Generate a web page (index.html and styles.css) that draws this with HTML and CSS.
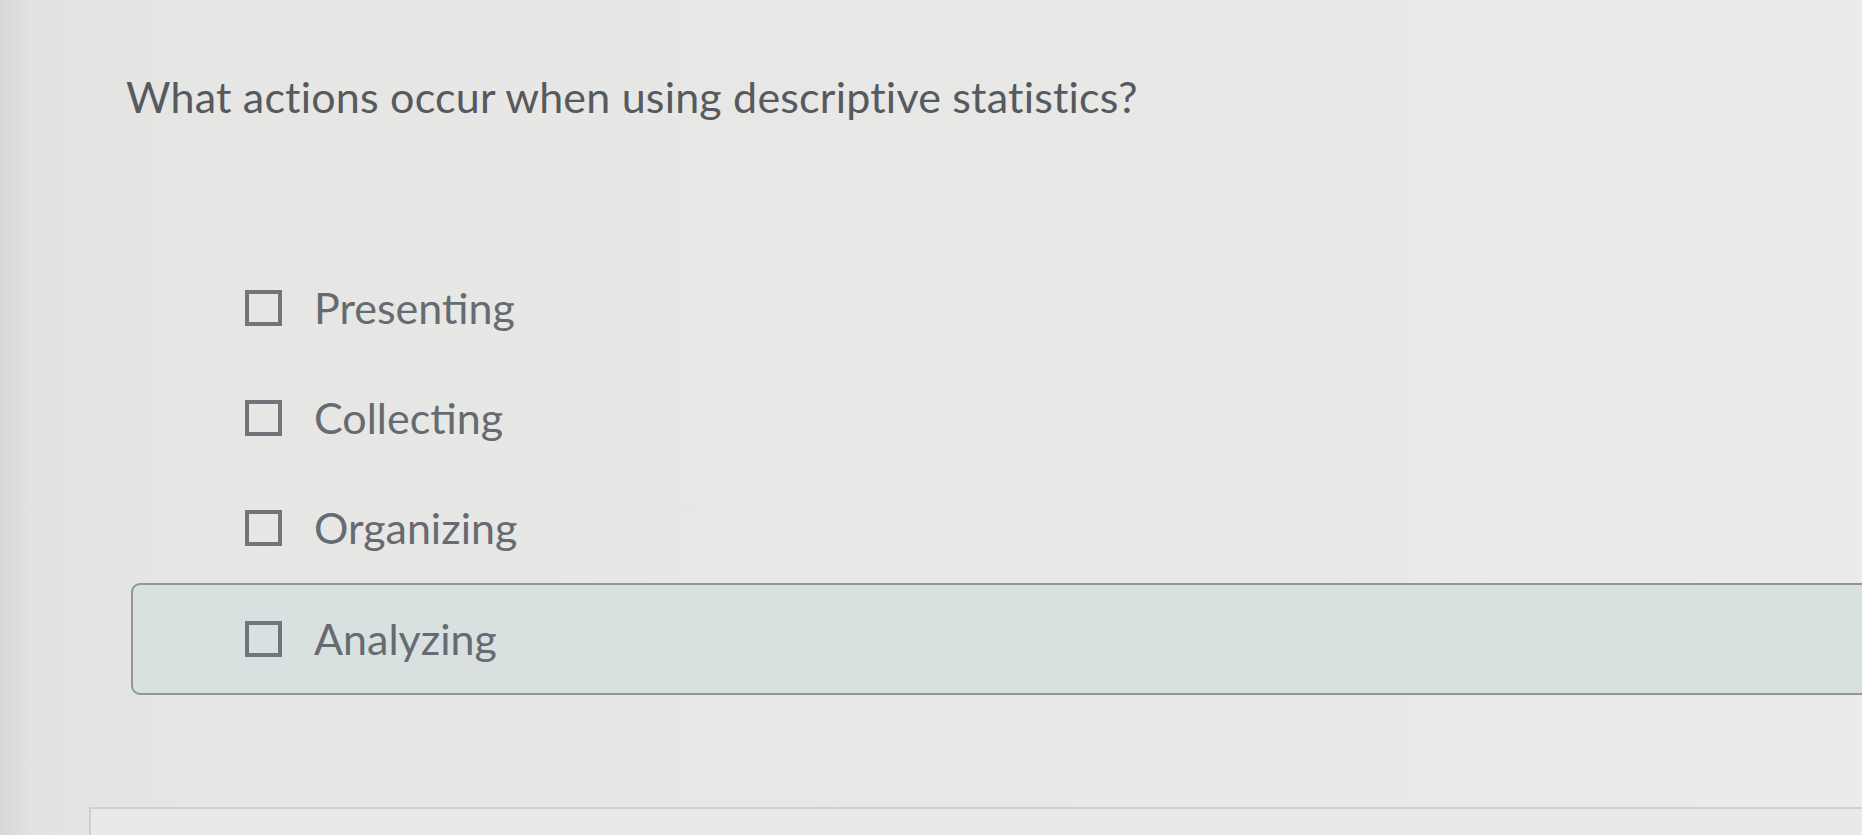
FILE: index.html
```html
<!DOCTYPE html>
<html lang="en">
<head>
<meta charset="utf-8">
<title>Descriptive statistics question</title>
<link rel="stylesheet" href="styles.css">
</head>
<body>
<div class="page">
  <h1 class="question">What actions occur when using descriptive statistics?</h1>
  <ul class="options">
    <li class="option"><span class="box"></span><span class="label">Presenting</span></li>
    <li class="option"><span class="box"></span><span class="label">Collecting</span></li>
    <li class="option"><span class="box"></span><span class="label">Organizing</span></li>
    <li class="option option-active"><span class="box"></span><span class="label">Analyzing</span></li>
  </ul>
  <div class="next-panel"></div>
</div>
</body>
</html>
```

FILE: styles.css
```css
html, body {
  margin: 0;
  padding: 0;
  height: 100%;
  overflow: hidden;
}
body {
  background: linear-gradient(90deg, #d6d7d6 0px, #e2e2e1 30px, #e6e6e4 200px, #e8e8e6 60%, #ebebea 100%);
  font-family: Lato, "Open Sans", "Liberation Sans", sans-serif;
}
.page {
  padding-top: 72px;
  padding-left: 126px;
}
.question {
  margin: 0;
  font-size: 43px;
  line-height: 50px;
  font-weight: 400;
  color: #565a5e;
  letter-spacing: 0.2px;
}
.options {
  list-style: none;
  margin: 131px 0 0 5px;
  padding: 0;
  width: 1800px;
}
.option {
  display: flex;
  align-items: center;
  gap: 32px;
  height: 110px;
  box-sizing: border-box;
  padding-left: 114px;
  color: #656b70;
  font-size: 43px;
}
.option-active {
  background: #d8e1e0;
  border: 2px solid #8d979b;
  border-radius: 9px;
  padding-left: 112px;
  height: 112px;
}
.box {
  width: 37px;
  height: 36px;
  box-sizing: border-box;
  border: 4px solid #6f7579;
  flex: none;
}
.label {
  line-height: 50px;
}
.next-panel {
  margin: 112px 0 0 -37px;
  height: 80px;
  border-top: 2px solid #d0d0cf;
  border-left: 2px solid #d0d0cf;
  background: #e9e9e7;
}
```
